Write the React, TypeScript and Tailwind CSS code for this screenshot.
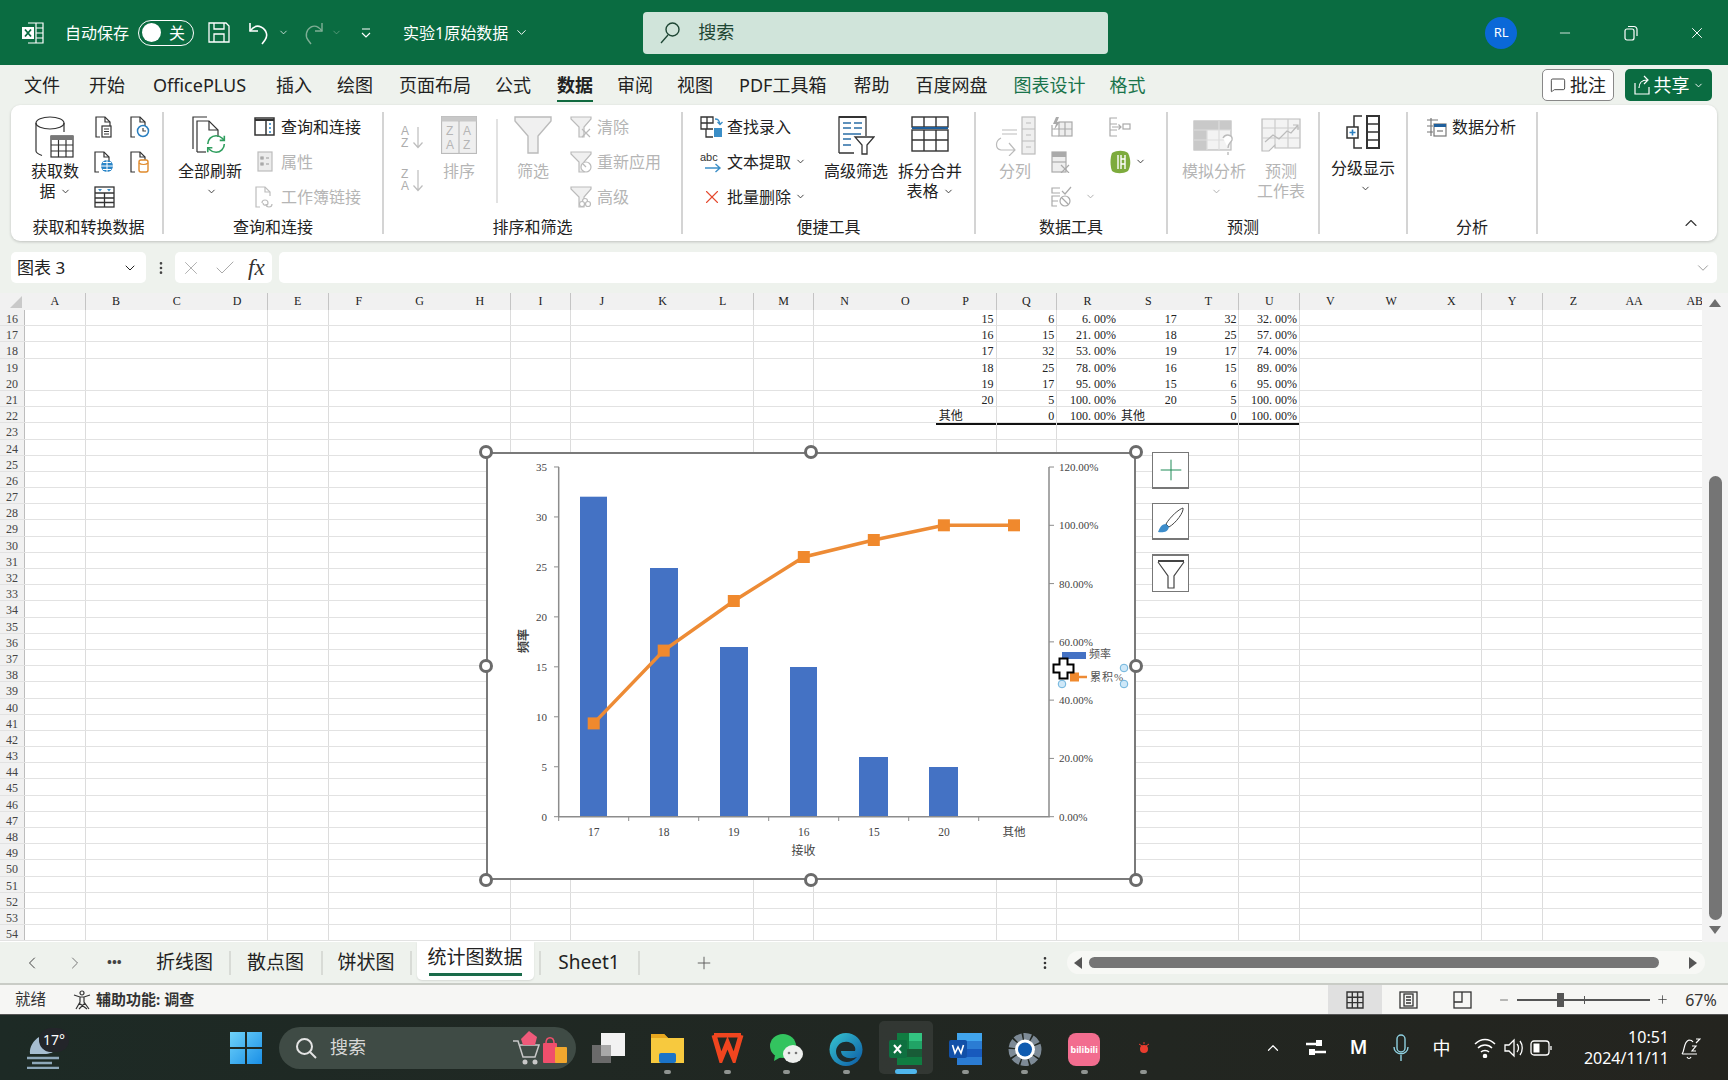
import React from "react";
import { ChevronDown, ChevronUp, ChevronLeft, ChevronRight, Plus, Minus, X, Check, MoreVertical, MessageSquare } from "lucide-react";

const serif = "font-['Liberation_Serif','Noto_Sans_CJK_SC',serif]";
const GR = "#bdbdbd";
const DK = "#333333";

function Ico({ w, h, color = DK, sw = 1.2, children }: { w: number; h: number; color?: string; sw?: number; children: React.ReactNode }) {
  return (
    <svg width={w} height={h} viewBox={`0 0 ${w} ${h}`} fill="none" stroke={color} strokeWidth={sw} className="shrink-0">
      {children}
    </svg>
  );
}

function Refresh({ x, y, s, color = "#2f9e5e" }: { x: number; y: number; s: number; color?: string }) {
  return (
    <g transform={`translate(${x} ${y}) scale(${s})`} stroke={color} strokeWidth={1.6 / s > 2 ? 2 : 1.6 / s}>
      <path d="M3 12a9 9 0 0 1 9-9 9.75 9.75 0 0 1 6.74 2.74L21 8" />
      <path d="M21 3v5h-5" />
      <path d="M21 12a9 9 0 0 1-9 9 9.75 9.75 0 0 1-6.74-2.74L3 16" />
      <path d="M8 16H3v5" />
    </g>
  );
}

const Doc = ({ c = DK }: { c?: string }) => (
  <g stroke={c}>
    <path d="M5 21H1V1h9l5 5v4" />
    <path d="M10 1v5h5" />
  </g>
);

const DocLines = () => (
  <Ico w={19} h={22}><Doc /><rect x="7" y="10" width="9" height="11" /><path d="M9 13h5M9 15.500h5M9 18h5" /></Ico>
);
const DocClock = () => (
  <Ico w={20} h={22}><Doc /><circle cx="13" cy="15" r="5.500" stroke="#2a7fc0" strokeWidth="1.5" fill="#fff" /><path d="M13 12v3h3" stroke="#444" /></Ico>
);
const DocWeb = () => (
  <Ico w={20} h={22}><Doc /><circle cx="13" cy="15" r="6" fill="#2a85c8" stroke="none" /><path d="M7 15h12M13 9v12M9 11.500h8M9 18.500h8" stroke="#fff" strokeWidth="1" /></Ico>
);
const DocDb = () => (
  <Ico w={20} h={22}><Doc /><rect x="9" y="9" width="9" height="12" rx="2" stroke="#e08a2c" strokeWidth="1.4" fill="#fff" /><path d="M9 12c2 2 7 2 9 0" stroke="#e08a2c" /></Ico>
);
const TableIco = () => (
  <Ico w={21} h={22} sw={1.3}>
    <rect x="1" y="1" width="19" height="20" />
    <path d="M1 7h19M1 12h19M1 16.500h19M10.500 7v14" />
    <path d="M4 3h4l-2 2.500zM13 3h4l-2 2.500z" fill="#3b8ec7" stroke="none" />
  </Ico>
);
const DataIco = () => (
  <Ico w={40} h={42}>
    <ellipse cx="15" cy="7" rx="14" ry="6" />
    <path d="M1 7v28c0 2 2 3 6 4.500M29 7v9" />
    <rect x="16" y="20" width="22" height="21" fill="#fff" />
    <rect x="16" y="20" width="22" height="4" fill="#777" stroke="none" />
    <path d="M16 29h22M16 35h22M23.500 24v17M31 24v17" />
  </Ico>
);
const RefreshAll = () => (
  <Ico w={36} h={41}>
    <path d="M1 33V1h14" />
    <path d="M5 36V5h12l9 9v7" />
    <path d="M17 5v9h9" />
    <path d="M5 36h9" />
    <Refresh x={13} y={17} s={0.92} />
  </Ico>
);
const PanelIco = () => (
  <Ico w={21} h={19} sw={1.5}>
    <rect x="1" y="1" width="19" height="17" />
    <path d="M1 3h19" strokeWidth="2" />
    <path d="M12 3v15" />
    <path d="M16 6v2M16 10v2M16 14v2" stroke="#2a85c8" />
  </Ico>
);
const PropIco = () => (
  <Ico w={16} h={21} color={GR}>
    <rect x="1" y="1" width="14" height="19" fill="#ececec" />
    <path d="M4 6h2v2H4zM4 12h2v2H4zM9 7h3M9 13h3" stroke="#999" />
  </Ico>
);
const LinkDocIco = () => (
  <Ico w={19} h={22} color={GR}>
    <Doc c={GR} />
    <path d="M7 17a3 3 0 0 1 6 0c0 3-5 3-5 0M11 18a3 3 0 0 0 6 0" />
  </Ico>
);
function SortIco({ a, b }: { a: string; b: string }) {
  return (
    <div className="w-[24px] h-[23px] flex">
      <div className="w-[11px] flex flex-col text-[12px] leading-[11.5px] text-[#adadad] font-['Liberation_Sans',sans-serif]">
        <span>{a}</span>
        <span>{b}</span>
      </div>
      <Ico w={13} h={23} color={GR}>
        <path d="M6 1v20M1.500 16.500l4.500 5 4.500-5" />
      </Ico>
    </div>
  );
}
const SortBig = () => (
  <Ico w={36} h={38} color="#bbb">
    <rect x="0.500" y="0.500" width="35" height="37" fill="#efefef" />
    <rect x="0.500" y="0.500" width="35" height="5" fill="#c8c8c8" stroke="none" />
    <path d="M18 5v32" />
    <g fill="#b5b5b5" stroke="none" fontSize="12" className="font-['Liberation_Sans',sans-serif]">
      <text x="5" y="19">Z</text><text x="5" y="33">A</text><text x="22" y="19">A</text><text x="22" y="33">Z</text>
    </g>
  </Ico>
);
const FunnelBig = () => (
  <Ico w={38} h={38} color="#bbb" sw={1.4}>
    <path d="M1 1h36v4L24 20v17H14V20L1 5z" fill="#f0f0f0" />
  </Ico>
);
function FunnelSm({ kind }: { kind: "x" | "r" | "a" }) {
  return (
    <Ico w={24} h={22} color="#bbb" sw={1.2}>
      <path d="M1 1h20v2l-7 8v10h-5V11L1 3z" fill="#f0f0f0" />
      {kind === "x" && <path d="M12 13l8 8M20 13l-8 8" />}
      {kind === "r" && <g><circle cx="16" cy="16" r="5" fill="#fff" /><path d="M13 13l3 3" /></g>}
      {kind === "a" && <g><circle cx="15" cy="15" r="2.500" fill="#fff" /><circle cx="12" cy="18" r="2.500" fill="#fff" /><circle cx="18" cy="18" r="2.500" fill="#fff" /></g>}
    </Ico>
  );
}
const FindIco = () => (
  <Ico w={24} h={22} sw={1.3}>
    <path d="M1 1h12v6H1zM1 7v6h12M7 1v12" />
    <path d="M6 13v8h7" />
    <rect x="14" y="12" width="8" height="9" fill="#3b8ec7" stroke="none" />
    <path d="M15 3c3 0 4 1 5 5M17.500 6l2.500 2.500L22.500 6" stroke="#3b8ec7" />
  </Ico>
);
const AbcIco = () => (
  <div className="w-[24px] h-[22px] flex flex-col font-['Liberation_Sans',sans-serif] text-[11px] leading-[12px] text-[#333]">
    <span>abc</span>
    <Ico w={24} h={10} color="#3b8ec7" sw={1.4}>
      <path d="M5 5h15M15.500 1l4.500 4-4.500 4" />
    </Ico>
  </div>
);
const AdvFilterIco = () => (
  <Ico w={37} h={40} sw={1.3}>
    <path d="M1 37V1h27v19M1 37h15" />
    <path d="M1 1h27" strokeWidth="2" />
    <path d="M5 7h8M16 7h8M5 12h8M16 12h8M5 18h18M5 23h8M5 29h8" stroke="#2a6ea6" />
    <path d="M17 21h19l-7 8v9h-5v-9z" fill="#fff" />
  </Ico>
);
const SplitIco = () => (
  <Ico w={38} h={36} sw={1.4}>
    <rect x="1" y="1" width="36" height="10" />
    <path d="M13 1v10M25 1v10" />
    <path d="M1 12h36" stroke="#1f5f9c" strokeWidth="2" />
    <rect x="1" y="14" width="36" height="21" />
    <path d="M13 14v21M25 14v21M1 24h36" />
  </Ico>
);
const ColsIco = () => (
  <Ico w={42} h={40} color="#bbb" sw={1.2}>
    <rect x="28" y="1" width="13" height="37" fill="#efefef" />
    <path d="M28 13h13M28 25h13M32 7h5M32 19h5M32 31h5" />
    <path d="M8 14h15M8 18h15" />
    <path d="M7 22c-6 3-6 11 0 12h13M15 27l6 7-6 6" />
  </Ico>
);
const FlashIco = () => (
  <Ico w={22} h={20} color="#aaa">
    <rect x="8" y="5" width="13" height="14" fill="#eee" />
    <path d="M14 5v14M8 12h13M1 8v11h7M1 12h7" />
    <path d="M5 0L2 7h3l-2 6 6-8H6l2-5z" fill="#aaa" stroke="none" />
  </Ico>
);
const DedupeIco = () => (
  <Ico w={20} h={22} color="#aaa">
    <rect x="1" y="1" width="14" height="20" fill="#eee" />
    <rect x="1" y="1" width="14" height="5" fill="#aaa" stroke="none" />
    <path d="M1 11h14" />
    <path d="M10 14l8 8M18 14l-8 8" />
  </Ico>
);
const ValidIco = () => (
  <Ico w={22} h={22} color="#aaa">
    <path d="M9 2H1v5h8M9 10H1v5h6M1 15v5h5" />
    <path d="M11 5l3 3 6-7" />
    <circle cx="14" cy="15" r="5" /><path d="M11 12l6 6" />
  </Ico>
);
const RelIco = () => (
  <Ico w={22} h={22} color="#aaa">
    <path d="M8 2H1v6h7M8 14H1v6h7M1 8v6" />
    <rect x="14" y="8" width="7" height="5" />
    <path d="M3 11h9M9.500 8.500L12 11l-2.500 2.500" />
  </Ico>
);
const GreenIco = () => (
  <Ico w={22} h={24} color="#7dab3c">
    <path d="M3 3c5-3 12-3 16 0 3 6 3 13 0 18-5 3-12 3-16 0-2-5-2-13 0-18z" fill="#7dab3c" stroke="none" />
    <path d="M9 5v14M12 5v14M16 5v14M12 9h4M12 14h4" stroke="#fff" strokeWidth="1.400" />
  </Ico>
);
const WhatIfIco = () => (
  <Ico w={42} h={37} color="#bbb">
    <rect x="1" y="1" width="37" height="29" fill="#f3f3f3" />
    <rect x="1" y="1" width="13" height="29" fill="#c9c9c9" stroke="none" />
    <rect x="1" y="1" width="37" height="9" fill="#c9c9c9" stroke="none" />
    <path d="M14 10v20M26 1v29M1 10h37M1 20h37" stroke="#ddd" />
    <path d="M30 18c3-5 10-3 9 2-1 3-4 3-4 8M35 32v3" fill="#fff" strokeWidth="1.400" />
  </Ico>
);
const ForecastIco = () => (
  <Ico w={40} h={35} color="#bbb">
    <path d="M1 33V1h38v29H14v-3l-6 6z" fill="#f3f3f3" />
    <path d="M14 1v26M27 1v29M1 10h38M1 20h38" stroke="#ccc" />
    <path d="M4 24l8-7 6 4 8-8 4 2 7-8M32 7h5v5" />
  </Ico>
);
const OutlineIco = () => (
  <Ico w={34} h={34} sw={1.5}>
    <rect x="21" y="1" width="12" height="32" strokeWidth="2" />
    <path d="M21 9h12M21 17h12M21 25h12" />
    <path d="M16 1H8v11M8 22v11h8" />
    <rect x="1" y="12" width="11" height="11" fill="#fff" />
    <path d="M3.500 17.500h6M6.500 14.500v6" stroke="#2a7fc0" strokeWidth="1.600" />
  </Ico>
);
const AnalyzeIco = () => (
  <Ico w={21} h={20} color="#777">
    <path d="M1 3h11M1 9h6M1 15h6M5 1v18" />
    <rect x="8" y="7" width="12" height="12" fill="#fff" />
    <rect x="8" y="7" width="12" height="3" fill="#1f5f9c" stroke="none" />
    <path d="M11 14h6" />
  </Ico>
);

function Big({ w, icon, lines, gray, ml = 0, lift = 0 }: { w: number; icon: React.ReactNode; lines: React.ReactNode[]; gray?: boolean; ml?: number; lift?: number }) {
  return (
    <div className="flex flex-col items-center shrink-0" style={{ width: w, marginLeft: ml }}>
      <div className="h-[48px] pt-[7px] flex justify-center">{icon}</div>
      <div className={`text-[16px] leading-[20px] flex flex-col items-center whitespace-nowrap ${gray ? "text-[#b5b5b5]" : "text-[#222]"}`} style={{ marginTop: 4 - lift }}>
        {lines.map((l, i) => <div key={i} className="h-[20px] flex items-center">{l}</div>)}
      </div>
    </div>
  );
}

const Chev = ({ gray }: { gray?: boolean }) => <ChevronDown size={11} strokeWidth={2} className={gray ? "text-[#aaa] ml-[4px] shrink-0" : "text-[#333] ml-[4px] shrink-0"} />;

function Row({ icon, text, gray, chev, iw, gap = 6 }: { icon: React.ReactNode; text: string; gray?: boolean; chev?: boolean; iw: number; gap?: number }) {
  return (
    <div className="h-[35px] flex items-center whitespace-nowrap">
      <div className="flex justify-center" style={{ width: iw, marginRight: gap }}>{icon}</div>
      <span className={`text-[16px] ${gray ? "text-[#b5b5b5]" : "text-[#222]"}`}>{text}</span>
      {chev && <Chev />}
    </div>
  );
}

function Group({ w, label, children, pad = 0 }: { w: number; label: string; children: React.ReactNode; pad?: number }) {
  return (
    <div className="shrink-0 border-r-2 border-[#d4d4d4] flex flex-col" style={{ width: w }}>
      <div className="h-[105px] shrink-0 -mt-[3px] flex">{children}</div>
      <div className="h-[24px] shrink-0 mt-[1px] flex items-center justify-center text-[16px] text-[#222] whitespace-nowrap" style={{ paddingLeft: pad }}>{label}</div>
    </div>
  );
}

function Ribbon() {
  return (
    <div className="mx-[11px] h-[136px] rounded-[9px] bg-white shadow-[0_1px_3px_rgba(0,0,0,0.2)] py-[7px] flex relative">
      <Group w={153} label="获取和转换数据" pad={4}>
        <div className="pl-[13px] flex">
          <Big w={62} icon={<DataIco />} lines={["获取数", <>据<Chev /></>]} />
          <div className="grid grid-cols-[36px_36px] grid-rows-[35px_35px_35px] place-items-center">
            <DocLines /><DocClock /><DocWeb /><DocDb /><TableIco />
          </div>
        </div>
      </Group>
      <Group w={220} label="查询和连接">
        <Big w={70} ml={11} icon={<RefreshAll />} lines={["全部刷新", <Chev />]} />
        <div className="ml-[9px]">
          <Row iw={21} icon={<PanelIco />} text="查询和连接" />
          <Row iw={21} icon={<PropIco />} text="属性" gray />
          <Row iw={21} icon={<LinkDocIco />} text="工作簿链接" gray />
        </div>
      </Group>
      <Group w={299} label="排序和筛选">
        <div className="ml-[17px] w-[24px] pt-[17px] flex flex-col gap-[20px]">
          <SortIco a="A" b="Z" />
          <SortIco a="Z" b="A" />
        </div>
        <Big w={60} ml={4} gray icon={<SortBig />} lines={["排序"]} />
        <div className="ml-[7px] mt-[10px] w-[2px] h-[84px] bg-[#e2e2e2]" />
        <Big w={60} ml={5} gray icon={<FunnelBig />} lines={["筛选"]} />
        <div className="ml-[7px]">
          <Row iw={24} gap={3} icon={<FunnelSm kind="x" />} text="清除" gray />
          <Row iw={24} gap={3} icon={<FunnelSm kind="r" />} text="重新应用" gray />
          <Row iw={24} gap={3} icon={<FunnelSm kind="a" />} text="高级" gray />
        </div>
      </Group>
      <Group w={293} label="便捷工具">
        <div className="ml-[17px] w-[121px]">
          <Row iw={24} gap={3} icon={<FindIco />} text="查找录入" />
          <Row iw={24} gap={3} icon={<AbcIco />} text="文本提取" chev />
          <Row iw={24} gap={3} icon={<X size={22} strokeWidth={1.2} className="text-[#e5482d]" />} text="批量删除" chev />
        </div>
        <Big w={70} icon={<AdvFilterIco />} lines={["高级筛选"]} />
        <Big w={70} ml={4} icon={<SplitIco />} lines={["拆分合并", <>表格<Chev /></>]} />
      </Group>
      <Group w={192} label="数据工具">
        <Big w={50} ml={14} gray icon={<ColsIco />} lines={["分列"]} />
        <div className="ml-[11px] w-[58px]">
          <div className="h-[35px] flex items-center"><FlashIco /></div>
          <div className="h-[35px] flex items-center"><DedupeIco /></div>
          <div className="h-[35px] flex items-center"><ValidIco /><ChevronDown size={11} className="ml-[12px] text-[#aaa]" /></div>
        </div>
        <div>
          <div className="h-[35px] flex items-center"><RelIco /></div>
          <div className="h-[35px] flex items-center"><GreenIco /><Chev /></div>
        </div>
      </Group>
      <Group w={152} label="预测">
        <Big w={64} ml={14} gray icon={<div className="pt-[4px]"><WhatIfIco /></div>} lines={["模拟分析", <Chev gray />]} />
        <Big w={64} ml={3} gray icon={<div className="pt-[2px]"><ForecastIco /></div>} lines={["预测", "工作表"]} />
      </Group>
      <Group w={88} label="">
        <Big w={64} ml={11} lift={3} icon={<div className="-mt-[1px]"><OutlineIco /></div>} lines={["分级显示", <Chev />]} />
      </Group>
      <Group w={130} label="分析">
        <div className="ml-[18px]">
          <Row iw={21} gap={5} icon={<AnalyzeIco />} text="数据分析" />
        </div>
      </Group>
      <div className="flex-1 flex items-end justify-end pr-[16px] pb-[1px]">
        <ChevronUp size={20} strokeWidth={1.3} className="text-[#333]" />
      </div>
    </div>
  );
}

function TitleBar() {
  return (
    <div className="h-[65px] bg-[#0a6c41] flex items-center text-white shrink-0">
      <svg width="22" height="22" viewBox="0 0 22 22" fill="none" stroke="#fff" strokeWidth="1.200" className="ml-[22px] shrink-0">
        <path d="M6 1h15v20H6M14 1v20M14 6h7M14 11h7M14 16h7" />
        <rect x="0" y="5" width="12" height="12" fill="#fff" stroke="none" />
        <path d="M3 7.500l6 7M9 7.500l-6 7" stroke="#0a6c41" strokeWidth="1.800" />
      </svg>
      <span className="ml-[21px] w-[73px] text-[16px] whitespace-nowrap">自动保存</span>
      <div className="w-[56px] h-[26px] rounded-full border-[1.5px] border-white flex items-center justify-between pl-[3px] pr-[8px]">
        <div className="w-[19px] h-[19px] rounded-full bg-white" />
        <span className="text-[16px] leading-none">关</span>
      </div>
      <svg width="22" height="21" viewBox="0 0 22 21" fill="none" stroke="#fff" strokeWidth="1.300" className="ml-[14px] shrink-0">
        <path d="M1 1h17l3 3v16H1z" /><path d="M6 1v6h10V1M6 20v-8h10v8" />
      </svg>
      <svg width="22" height="24" viewBox="0 0 22 24" fill="none" stroke="#fff" strokeWidth="1.600" className="ml-[18px] shrink-0">
        <path d="M2 2v8h8" /><path d="M2 10c3-4 7-6 11-4 6 3 7 9 4 13l-3 4" />
      </svg>
      <ChevronDown size={11} strokeWidth={1.6} className="ml-[8px]" />
      <svg width="20" height="24" viewBox="0 0 20 24" fill="none" stroke="#7fae95" strokeWidth="1.400" className="ml-[15px] shrink-0">
        <path d="M18 2v8h-7" /><path d="M18 10c-3-4-7-6-11-4-5 3-6 9-3 13l3 4" />
      </svg>
      <ChevronDown size={11} strokeWidth={1.4} className="ml-[7px] text-[#7fae95]" />
      <svg width="12" height="14" viewBox="0 0 12 14" fill="none" stroke="#fff" strokeWidth="1.200" className="ml-[18px] shrink-0">
        <path d="M2 3h8M2 7l4 4 4-4" />
      </svg>
      <span className="ml-[31px] text-[16px] whitespace-nowrap">实验1原始数据</span>
      <ChevronDown size={15} strokeWidth={1.5} className="ml-[6px]" />
      <div className="ml-[114px] w-[465px] h-[42px] rounded-[4px] bg-[#d0e4da] flex items-center pl-[17px] text-[#1e4634]">
        <svg width="20" height="22" viewBox="0 0 20 22" fill="none" stroke="#1e4634" strokeWidth="1.400" className="shrink-0">
          <circle cx="12.500" cy="7.500" r="6.500" /><path d="M8 13L1 21" />
        </svg>
        <span className="ml-[18px] text-[18px]">搜索</span>
      </div>
      <div className="ml-[377px] w-[32px] h-[32px] rounded-full bg-[#0a68d8] flex items-center justify-center text-[13px]">RL</div>
      <Minus size={16} strokeWidth={1.2} className="ml-[40px]" />
      <svg width="16" height="16" viewBox="0 0 16 16" fill="none" stroke="#fff" strokeWidth="1.200" className="ml-[50px] shrink-0">
        <rect x="2" y="4" width="9" height="11" rx="2" /><path d="M5 1.500h6a3 3 0 0 1 3 3V11" />
      </svg>
      <X size={18} strokeWidth={1.3} className="ml-[49px]" />
    </div>
  );
}

const menus: [string, number][] = [
  ["文件", 0], ["开始", 29], ["OfficePLUS", 28], ["插入", 30], ["绘图", 25], ["页面布局", 26], ["公式", 24], ["数据", 26],
  ["审阅", 24], ["视图", 24], ["PDF工具箱", 26], ["帮助", 27], ["百度网盘", 26], ["图表设计", 26], ["格式", 24],
];

function MenuBar() {
  return (
    <div className="h-[40px] flex items-center pl-[24px] shrink-0">
      <div className="flex text-[18px] text-[#222] whitespace-nowrap">
        {menus.map(([m, gap]) => (
          <div key={m} style={{ marginLeft: gap }} className={`relative ${m === "数据" ? "font-bold" : ""} ${m === "图表设计" || m === "格式" ? "text-[#19744b]" : ""}`}>
            {m}
            {m === "数据" && <div className="absolute left-0 right-0 -bottom-[3px] h-[2px] bg-[#10693f]" />}
          </div>
        ))}
      </div>
      <div className="ml-auto flex items-center gap-[11px] pr-[16px]">
        <div className="w-[72px] h-[32px] rounded-[5px] border border-[#888] bg-white flex items-center justify-center gap-[4px] text-[18px] text-[#222]">
          <MessageSquare size={16} strokeWidth={1.2} />批注
        </div>
        <div className="w-[87px] h-[32px] rounded-[5px] bg-[#0a6c41] flex items-center justify-center gap-[3px] text-[18px] text-white">
          <svg width="17" height="20" viewBox="0 0 17 20" fill="none" stroke="#fff" strokeWidth="1.200">
            <path d="M1 8v11h14v-7M5 13c0-5 3-8 8-8M10 1l4 4-4 4" />
          </svg>
          共享<ChevronDown size={11} strokeWidth={2} />
        </div>
      </div>
    </div>
  );
}

function FormulaBar() {
  return (
    <div className="mt-[11px] h-[31px] flex mx-[11px] shrink-0">
      <div className="w-[135px] bg-white rounded-[5px] flex items-center pl-[6px] pr-[8px] justify-between text-[17px] text-[#222]">
        图表 3<ChevronDown size={16} strokeWidth={1.5} />
      </div>
      <div className="w-[29px] flex items-center justify-center"><MoreVertical size={16} strokeWidth={2} className="text-[#444]" /></div>
      <div className="w-[97px] bg-white rounded-[5px] flex items-center pl-[5px] gap-[11px]">
        <X size={22} strokeWidth={1} className="text-[#aaa]" />
        <Check size={24} strokeWidth={1} className="text-[#aaa]" />
        <span className={`${serif} italic text-[23px] leading-none text-[#333]`}>fx</span>
      </div>
      <div className="ml-[7px] flex-1 bg-white rounded-[5px] flex items-center justify-end pr-[5px]">
        <ChevronDown size={18} strokeWidth={1.1} className="text-[#888]" />
      </div>
    </div>
  );
}

const cols = ["A","B","C","D","E","F","G","H","I","J","K","L","M","N","O","P","Q","R","S","T","U","V","W","X","Y","Z","AA","AB"];
const strong = [0, 3, 4, 7, 8, 11, 12, 15, 16, 19, 20, 23, 24];
const rows = Array.from({ length: 39 }, (_, i) => i + 16);
const data: Record<number, (string | number)[]> = {
  16: [15, 6, "6. 00%", 17, 32, "32. 00%"],
  17: [16, 15, "21. 00%", 18, 25, "57. 00%"],
  18: [17, 32, "53. 00%", 19, 17, "74. 00%"],
  19: [18, 25, "78. 00%", 16, 15, "89. 00%"],
  20: [19, 17, "95. 00%", 15, 6, "95. 00%"],
  21: [20, 5, "100. 00%", 20, 5, "100. 00%"],
  22: ["其他", 0, "100. 00%", "其他", 0, "100. 00%"],
};

function Grid() {
  return (
    <div className={`${serif} text-[#222] w-[1702px] bg-white overflow-hidden shrink-0`}>
      <div className="h-[17px] flex bg-[#f1f1f1] text-[12px] leading-[17px]">
        <div className="w-[25px] shrink-0 flex items-center justify-end pr-[3px]">
          <div className="w-0 h-0 border-l-[12px] border-l-transparent border-b-[12px] border-b-[#c9c9c9]" />
        </div>
        {cols.map((c, i) => (
          <div key={c} className={`w-[60.73px] shrink-0 text-center ${strong.includes(i) ? "border-r border-[#c4c4c4]" : ""}`}>{c}</div>
        ))}
      </div>
      {rows.map((r) => (
        <div key={r} className={`h-[16.2px] flex ${r === 19 ? "" : "border-b border-[#e2e2e2]"}`}>
          <div className="w-[25px] shrink-0 bg-[#f1f1f1] border-r border-[#bdbdbd] text-[12px] leading-[18px] text-center text-[#444]">{r}</div>
          {cols.map((c, i) => {
            const v = data[r] && i >= 15 && i <= 20 ? data[r][i - 15] : undefined;
            const left = v === "其他";
            const rule = r === 22 && i >= 15 && i <= 20;
            return (
              <div
                key={c}
                className={`w-[60.73px] shrink-0 text-[12px] leading-[18px] whitespace-nowrap ${left ? "text-left pl-[3px]" : "text-right pr-[2px]"} ${strong.includes(i) ? "border-r border-[#dcdcdc]" : ""} ${rule ? "h-[18px] border-b-2 border-b-[#111]" : ""}`}
              >
                {v}
              </div>
            );
          })}
        </div>
      ))}
    </div>
  );
}

const bars = [
  { x: 580, w: 27, y: 496.7 },
  { x: 650, w: 28, y: 568 },
  { x: 720, w: 28, y: 647 },
  { x: 790, w: 27, y: 667 },
  { x: 859, w: 29, y: 757 },
  { x: 929, w: 29, y: 767 },
];
const pts: [number, number][] = [[593.7, 723.4], [663.7, 650.6], [733.8, 601], [803.8, 557], [873.8, 540], [943.9, 525.3], [1014, 525.3]];
const cats = ["17", "18", "19", "16", "15", "20", "其他"];

function Plot() {
  const axis = "#8c8c8c";
  const tf = "font-['Liberation_Serif','Noto_Sans_CJK_SC',serif]";
  return (
    <svg width="650" height="428" viewBox="486 452 650 428" className="absolute left-0 top-0">
      {bars.map((b) => <rect key={b.x} x={b.x} y={b.y} width={b.w} height={816.7 - b.y} fill="#4472c4" />)}
      <path d="M558.700 467V816.700H1049V467" stroke={axis} fill="none" strokeWidth="1.500" />
      {[0, 5, 10, 15, 20, 25, 30, 35].map((v, i) => {
        const y = 816.7 - i * 49.96;
        return (
          <g key={v}>
            <path d={`M554 ${y}h5`} stroke={axis} />
            <text x="547" y={y + 4} textAnchor="end" fontSize="11" fill="#444" className={tf}>{v}</text>
          </g>
        );
      })}
      {["0.00%", "20.00%", "40.00%", "60.00%", "80.00%", "100.00%", "120.00%"].map((v, i) => {
        const y = 816.7 - i * 58.28;
        return (
          <g key={v}>
            <path d={`M1049 ${y}h5`} stroke={axis} />
            <text x="1059" y={y + 4} fontSize="11" fill="#444" className={tf}>{v}</text>
          </g>
        );
      })}
      {cats.map((c, i) => (
        <g key={c}>
          <path d={`M${558.7 + i * 70} 817v4`} stroke={axis} />
          <text x={593.7 + i * 70.05} y="836" textAnchor="middle" fontSize="11.500" fill="#444" className={tf}>{c}</text>
        </g>
      ))}
      <text x="803.500" y="855" textAnchor="middle" fontSize="12" fill="#444" className={tf}>接收</text>
      <text transform="translate(528 641) rotate(-90)" textAnchor="middle" fontSize="12" fontWeight="700" fill="#444" className={tf}>频率</text>
      <polyline points={pts.map((p) => p.join(",")).join(" ")} fill="none" stroke="#ed8b35" strokeWidth="3.500" />
      {pts.map((p) => <rect key={p[0]} x={p[0] - 6} y={p[1] - 6} width="12" height="12" fill="#f0892d" />)}

      <rect x="1062" y="652" width="24" height="7" fill="#4472c4" />
      <text x="1089" y="658" fontSize="11" fill="#555" className={tf}>频率</text>
      <path d="M1070 677h17" stroke="#ed8b35" strokeWidth="2.500" />
      <rect x="1070" y="672.500" width="9" height="9" fill="#f0892d" />
      <text x="1090" y="681" fontSize="11" fill="#555" letterSpacing="1" className={tf}>累积%</text>
      {[[1062, 684], [1124, 668], [1124, 684]].map(([x, y]) => (
        <circle key={`${x}-${y}`} cx={x} cy={y} r="3.800" fill="#cfe8f8" stroke="#6db3dc" />
      ))}
      <path d="M1059.500 658.500h8v6h6v8h-6v6h-8v-6h-6v-8h6z" fill="#fff" stroke="#000" strokeWidth="2" />
    </svg>
  );
}

function Handle({ cls }: { cls: string }) {
  return <div className={`absolute w-[14px] h-[14px] rounded-full bg-white border-[3px] border-[#6b6b6b] ${cls}`} />;
}

function Chart() {
  return (
    <>
      <div className="absolute left-[486px] top-[159px] w-[650px] h-[428px] bg-white border-2 border-[#7a7a7a]">
        <div className="absolute -left-[2px] -top-[2px] w-[650px] h-[428px]">
          <Plot />
          <Handle cls="-left-[7px] -top-[7px]" />
          <Handle cls="left-[318px] -top-[7px]" />
          <Handle cls="-right-[7px] -top-[7px]" />
          <Handle cls="-left-[7px] top-[207px]" />
          <Handle cls="-right-[7px] top-[207px]" />
          <Handle cls="-left-[7px] -bottom-[7px]" />
          <Handle cls="left-[318px] -bottom-[7px]" />
          <Handle cls="-right-[7px] -bottom-[7px]" />
        </div>
      </div>
      <div className="absolute left-[1152px] top-[159px] flex flex-col gap-[14px]">
        <div className="w-[37px] h-[37px] bg-white border border-[#777] border-b-2 flex items-center justify-center">
          <Plus size={34} strokeWidth={0.7} className="text-[#1d8a55]" />
        </div>
        <div className="w-[37px] h-[37px] bg-white border border-[#777] border-b-2 flex items-center justify-center">
          <svg width="32" height="32" viewBox="0 0 32 32" fill="none" stroke="#444" strokeWidth="1">
            <path d="M28 3c1 4-7 15-14 19l-3-3C15 12 24 4 28 3z" />
            <path d="M11 19c-5 0-6 4-8 8 5 1 10 0 11-5z" fill="#3d8dcb" stroke="none" />
          </svg>
        </div>
        <div className="w-[37px] h-[38px] bg-white border border-[#777] border-t-2 flex items-center justify-center">
          <svg width="30" height="32" viewBox="0 0 30 32" fill="none" stroke="#444" strokeWidth="1.200">
            <path d="M2 3h26" strokeWidth="2" /><path d="M2 4l10 14v12h6V18L28 4" />
          </svg>
        </div>
      </div>
    </>
  );
}

function Sheet() {
  return (
    <div className="mt-[10px] h-[649px] relative flex overflow-hidden shrink-0">
      <Grid />
      <div className="flex-1 bg-[#f3f3f3] flex flex-col items-center">
        <div className="mt-[6px] w-0 h-0 border-l-[6px] border-r-[6px] border-b-[8px] border-l-transparent border-r-transparent border-b-[#6e6e6e]" />
        <div className="mt-[169px] w-[13px] h-[444px] rounded-full bg-[#757575]" />
        <div className="mt-[6px] w-0 h-0 border-l-[6px] border-r-[6px] border-t-[8px] border-l-transparent border-r-transparent border-t-[#6e6e6e]" />
      </div>
      <Chart />
    </div>
  );
}

function TabBar() {
  const Sep = () => <div className="w-[2px] h-[24px] bg-[#d8dbd6]" />;
  const Tab = ({ t, w }: { t: string; w: number }) => <div className="text-center text-[19px] text-[#222] whitespace-nowrap" style={{ width: w }}>{t}</div>;
  return (
    <div className="h-[43px] bg-[#eef2ed] border-b-2 border-[#c9ccc6] flex items-center shrink-0">
      <ChevronLeft size={20} strokeWidth={1.2} className="ml-[22px] text-[#444]" />
      <ChevronRight size={20} strokeWidth={1.2} className="ml-[23px] text-[#777]" />
      <span className="ml-[22px] w-[33.5px] text-[13px] font-bold leading-none text-[#444]">•••</span>
      <Tab t="折线图" w={88} />
      <Sep />
      <Tab t="散点图" w={90} />
      <Sep />
      <Tab t="饼状图" w={87} />
      <Sep />
      <div className="ml-[5px] self-start w-[117px] h-[38px] bg-white rounded-b-[5px] flex flex-col items-center shadow-[0_1px_2px_rgba(0,0,0,0.1)]">
        <div className="text-[19px] leading-[31px] text-[#222] whitespace-nowrap">统计图数据</div>
        <div className="w-[93px] h-[3px] bg-[#1a6b4a]" />
      </div>
      <div className="ml-[5px]"><Sep /></div>
      <Tab t="Sheet1" w={97} />
      <Sep />
      <Plus size={20} strokeWidth={1.1} className="ml-[54px] text-[#555]" />
      <MoreVertical size={16} strokeWidth={2} className="ml-[323px] text-[#333]" />
      <div className="ml-[14px] w-[638px] h-[23px] rounded-full bg-[#f7f8f5] flex items-center pl-[7px]">
        <div className="w-0 h-0 border-t-[6px] border-b-[6px] border-r-[8px] border-t-transparent border-b-transparent border-r-[#555]" />
        <div className="ml-[7px] w-[570px] h-[11px] rounded-full bg-[#757575]" />
        <div className="ml-[30px] w-0 h-0 border-t-[6px] border-b-[6px] border-l-[8px] border-t-transparent border-b-transparent border-l-[#555]" />
      </div>
    </div>
  );
}

function StatusBar() {
  return (
    <div className="h-[30px] bg-[#f6f6f4] border-b border-[#555] flex items-center text-[#333] shrink-0">
      <span className="ml-[15px] text-[15.500px]">就绪</span>
      <svg width="18" height="20" viewBox="0 0 18 20" fill="none" stroke="#333" strokeWidth="1.200" className="ml-[27px] shrink-0">
        <circle cx="9" cy="3" r="2" /><path d="M1 5l6 2 4 0 6-2M7 7v5l-4 7M11 7v5l5 7M6 13l8 6M12 13l-6 6" />
      </svg>
      <span className="ml-[5px] text-[15px] font-bold whitespace-nowrap">辅助功能: 调查</span>
      <div className="ml-[1134px] w-[54px] h-full bg-[#e0e0e0] flex items-center justify-center">
        <svg width="18" height="18" viewBox="0 0 18 18" fill="none" stroke="#333" strokeWidth="1.400"><path d="M1 1h16v16H1zM1 6.300h16M1 11.600h16M6.300 1v16M11.600 1v16" /></svg>
      </div>
      <svg width="19" height="18" viewBox="0 0 19 18" fill="none" stroke="#333" strokeWidth="1.300" className="ml-[17px] shrink-0"><rect x="1" y="1" width="17" height="16" /><rect x="5" y="3" width="9" height="12" /><path d="M7 6h5M7 9h5M7 12h5" /></svg>
      <svg width="19" height="18" viewBox="0 0 19 18" fill="none" stroke="#333" strokeWidth="1.300" className="ml-[35px] shrink-0"><rect x="1" y="1" width="17" height="16" /><path d="M9 1v10H1" /></svg>
      <Minus size={12} strokeWidth={1.3} className="ml-[26px]" />
      <div className="ml-[7px] w-[133px] h-[2px] bg-[#555] relative">
        <div className="absolute left-[40px] -top-[6px] w-[7px] h-[14px] bg-[#555]" />
        <div className="absolute left-[67px] -top-[3px] w-[1px] h-[8px] bg-[#555]" />
      </div>
      <Plus size={13} strokeWidth={1.3} className="ml-[6px]" />
      <span className="ml-[16px] text-[16px] text-[#333]">67%</span>
    </div>
  );
}

function TaskItem({ children, dot = true }: { children: React.ReactNode; dot?: boolean }) {
  return (
    <div className="w-[59.500px] h-[65px] flex flex-col items-center shrink-0">
      <div className="h-[51px] pt-[18px] flex justify-center">{children}</div>
      <div className={`mt-[4px] w-[7px] h-[4px] rounded-full ${dot ? "bg-[#8f9491]" : ""}`} />
    </div>
  );
}

function TaskBar() {
  return (
    <div className="h-[65px] flex-1 bg-linear-to-r from-[#1d2a25] to-[#24241f] flex items-center text-white">
      <div className="ml-[26px] w-[36px] relative h-[40px] shrink-0">
        <svg width="34" height="34" viewBox="0 0 34 34" className="absolute top-[7px] left-0">
          <path d="M13 2c-5 3-10 10-9 17h14c6 0 9-2 9-2-8 0-14-5-14-15z" fill="#a6bdd0" />
          <path d="M1 23h32M6 28h20M1 33h32" stroke="#8ea8ba" strokeWidth="2.500" />
        </svg>
        <div className="absolute left-[13px] top-0 w-[30px] h-[24px] rounded-full bg-[#23252a] text-[14px] flex items-center justify-center">17°</div>
      </div>
      <svg width="32" height="32" viewBox="0 0 32 32" className="ml-[168px] shrink-0">
        <defs><linearGradient id="win" x1="0" y1="0" x2="1" y2="1"><stop offset="0" stopColor="#6fd3fb" /><stop offset="1" stopColor="#1a8fe6" /></linearGradient></defs>
        <path d="M0 0h15v15H0zM17 0h15v15H17zM0 17h15v15H0zM17 17h15v15H17z" fill="url(#win)" />
      </svg>
      <div className="ml-[17px] w-[297px] h-[42px] rounded-full bg-[#3f4b45] flex items-center pl-[16px] shrink-0">
        <svg width="22" height="22" viewBox="0 0 22 22" fill="none" stroke="#e4e4e4" strokeWidth="2"><circle cx="9.500" cy="9.500" r="7.500" /><path d="M15 15l6 6" /></svg>
        <span className="ml-[13px] text-[18px] text-[#d8d8d8]">搜索</span>
        <svg width="56" height="38" viewBox="0 0 56 38" fill="none" className="ml-[147px] shrink-0">
          <path d="M0 12h5l5 16h12l4-12H7" stroke="#c8c8c8" strokeWidth="1.500" />
          <path d="M8 10l8-8 8 6-2 8H10z" fill="#ef5a7a" />
          <circle cx="12" cy="33" r="2.500" fill="#c8c8c8" /><circle cx="22" cy="33" r="2.500" fill="#c8c8c8" />
          <rect x="30" y="14" width="14" height="20" rx="1" fill="#f04f6c" />
          <rect x="42" y="18" width="12" height="16" rx="1" fill="#f2a72e" />
          <path d="M33 14c0-7 8-7 8 0" stroke="#f04f6c" strokeWidth="1.500" />
        </svg>
      </div>
      <div className="ml-[2.500px] flex">
        <TaskItem dot={false}>
          <svg width="33" height="30" viewBox="0 0 33 30"><rect x="0" y="12" width="19" height="18" fill="#6a6a6a" /><rect x="9" y="0" width="24" height="23" fill="#f2f2f2" /><rect x="9" y="12" width="10" height="11" fill="#a8a8a8" /></svg>
        </TaskItem>
        <TaskItem>
          <svg width="33" height="30" viewBox="0 0 33 30"><path d="M0 1h13l4 4h16v25H0z" fill="#f7c93e" /><path d="M0 1h13l4 4H0z" fill="#e8a71f" /><rect x="8" y="20" width="17" height="10" rx="2" fill="#1b74c8" /></svg>
        </TaskItem>
        <TaskItem>
          <svg width="33" height="30" viewBox="0 0 33 30" fill="none" stroke="#f0451f" strokeWidth="5"><path d="M3 2h27M3 2l7 24 6.500-16L23 26 30 2" /></svg>
        </TaskItem>
        <TaskItem>
          <svg width="33" height="32" viewBox="0 0 33 32"><ellipse cx="13" cy="13" rx="13" ry="12" fill="#33c45f" /><path d="M5 22l-1 6 7-4z" fill="#33c45f" /><ellipse cx="23" cy="21" rx="10" ry="9" fill="#eef0ee" /><circle cx="19" cy="20" r="1.300" fill="#777" /><circle cx="26" cy="20" r="1.300" fill="#777" /></svg>
        </TaskItem>
        <TaskItem>
          <svg width="34" height="33" viewBox="0 0 34 33"><defs><linearGradient id="edge" x1="0" y1="0" x2="1" y2="1"><stop offset="0" stopColor="#37c6d0" /><stop offset="1" stopColor="#0c59a4" /></linearGradient></defs><circle cx="17" cy="16.500" r="16.500" fill="url(#edge)" /><path d="M7 18c1-8 9-11 15-8 4 2 5 6 4 8H12c0 6 8 9 16 6-8 9-21 5-21-6z" fill="#1f2a2a" /></svg>
        </TaskItem>
        <div className="w-[59.500px] h-[65px] flex flex-col items-center shrink-0 py-[6px]">
          <div className="w-[54px] h-[54px] rounded-[5px] bg-[#ffffff14] flex flex-col items-center pt-[12px]">
            <svg width="33" height="32" viewBox="0 0 33 32"><path d="M8 0h25v32H8z" fill="#107c41" /><path d="M20 0h13v8H20z" fill="#33c481" /><path d="M20 8h13v8H20z" fill="#21a366" /><path d="M8 16h25v8H8z" fill="#185c37" /><rect x="0" y="7" width="18" height="18" rx="2" fill="#0e7040" /><path d="M5 12l7 8M12 12l-7 8" stroke="#fff" strokeWidth="2" /></svg>
            <div className="mt-[4px] w-[22px] h-[5px] rounded-full bg-[#4fb6ec]" />
          </div>
        </div>
        <TaskItem>
          <svg width="33" height="32" viewBox="0 0 33 32"><path d="M8 0h25v32H8z" fill="#2b7cd3" /><path d="M8 0h25v8H8z" fill="#41a5ee" /><path d="M8 16h25v8H8z" fill="#185abd" /><rect x="0" y="7" width="18" height="18" rx="2" fill="#1250a8" /><path d="M3.500 12l2.500 8 3-6 3 6 2.500-8" stroke="#fff" strokeWidth="1.600" fill="none" /></svg>
        </TaskItem>
        <TaskItem>
          <svg width="34" height="33" viewBox="0 0 34 33"><circle cx="17" cy="16.500" r="13" fill="none" stroke="#7d8a96" strokeWidth="7" strokeDasharray="7 1.500" /><circle cx="17" cy="16.500" r="10" fill="#fff" /><circle cx="17" cy="16.500" r="7" fill="#0f5bb0" /></svg>
        </TaskItem>
        <TaskItem>
          <div className="w-[32px] h-[33px] rounded-[8px] bg-[#f26d8f] flex items-center justify-center text-[9px] font-bold text-white leading-none">bilibili</div>
        </TaskItem>
        <TaskItem>
          <svg width="14" height="33" viewBox="0 0 14 33"><circle cx="7" cy="16" r="4" fill="#ea3d2f" /><path d="M2 11l3 2M12 11l-3 2M7 9v2" stroke="#ea3d2f" /></svg>
        </TaskItem>
      </div>
      <ChevronUp size={18} strokeWidth={1.6} className="ml-[90px] text-white" />
      <svg width="20" height="20" viewBox="0 0 20 20" fill="#fff" stroke="#fff" className="ml-[24px] shrink-0"><path d="M0 6h14M6 14h14" strokeWidth="2.500" /><rect x="10" y="2" width="6" height="6" stroke="none" /><rect x="3" y="11" width="6" height="6" stroke="none" /></svg>
      <span className="ml-[22px] w-[22px] text-[19px] leading-none font-semibold text-center">M</span>
      <svg width="16" height="28" viewBox="0 0 16 28" fill="none" stroke="#8fd0e0" strokeWidth="1.400" className="ml-[23px] shrink-0"><rect x="4" y="1" width="8" height="17" rx="4" /><path d="M1 13c0 9 14 9 14 0M8 21v6" /></svg>
      <span className="ml-[24px] text-[18px] leading-none">中</span>
      <svg width="22" height="20" viewBox="0 0 22 20" fill="none" stroke="#fff" strokeWidth="1.500" className="ml-[23px] shrink-0"><path d="M1 6c6-6 14-6 20 0M4 10c4-4 10-4 14 0M7 14c2-2 6-2 8 0" /><circle cx="11" cy="18" r="1.500" fill="#fff" /></svg>
      <svg width="20" height="20" viewBox="0 0 20 20" fill="none" stroke="#fff" strokeWidth="1.300" className="ml-[8px] shrink-0"><path d="M1 7h4l5-5v16l-5-5H1z" /><path d="M13 6c2 2 2 6 0 8M16 3c3 4 3 10 0 14" /></svg>
      <svg width="22" height="16" viewBox="0 0 22 16" fill="none" stroke="#fff" strokeWidth="1.300" className="ml-[6px] shrink-0"><rect x="1" y="1" width="18" height="14" rx="3" /><rect x="3.500" y="3.500" width="6" height="9" fill="#fff" stroke="none" /><path d="M21 6v4" /></svg>
      <div className="ml-auto mr-[10px] text-right text-[16px] leading-[21px] text-white">
        <div>10:51</div>
        <div>2024/11/11</div>
      </div>
      <svg width="22" height="24" viewBox="0 0 22 24" fill="none" stroke="#fff" strokeWidth="1.200" className="mr-[27px] shrink-0"><path d="M3 18c3-3 1-12 7-14 2 0 3 0 4 2M3 18h15M8 21c1 2 3 2 4 0M13 10h4l-4 5h4M17 3h4l-4 4" /></svg>
    </div>
  );
}

export default function App() {
  return (
    <div className="w-[1728px] h-[1080px] overflow-hidden bg-[#eef2ed] flex flex-col font-['Noto_Sans','Noto_Sans_CJK_SC',sans-serif]">
      <TitleBar />
      <MenuBar />
      <Ribbon />
      <FormulaBar />
      <Sheet />
      <TabBar />
      <StatusBar />
      <TaskBar />
    </div>
  );
}
